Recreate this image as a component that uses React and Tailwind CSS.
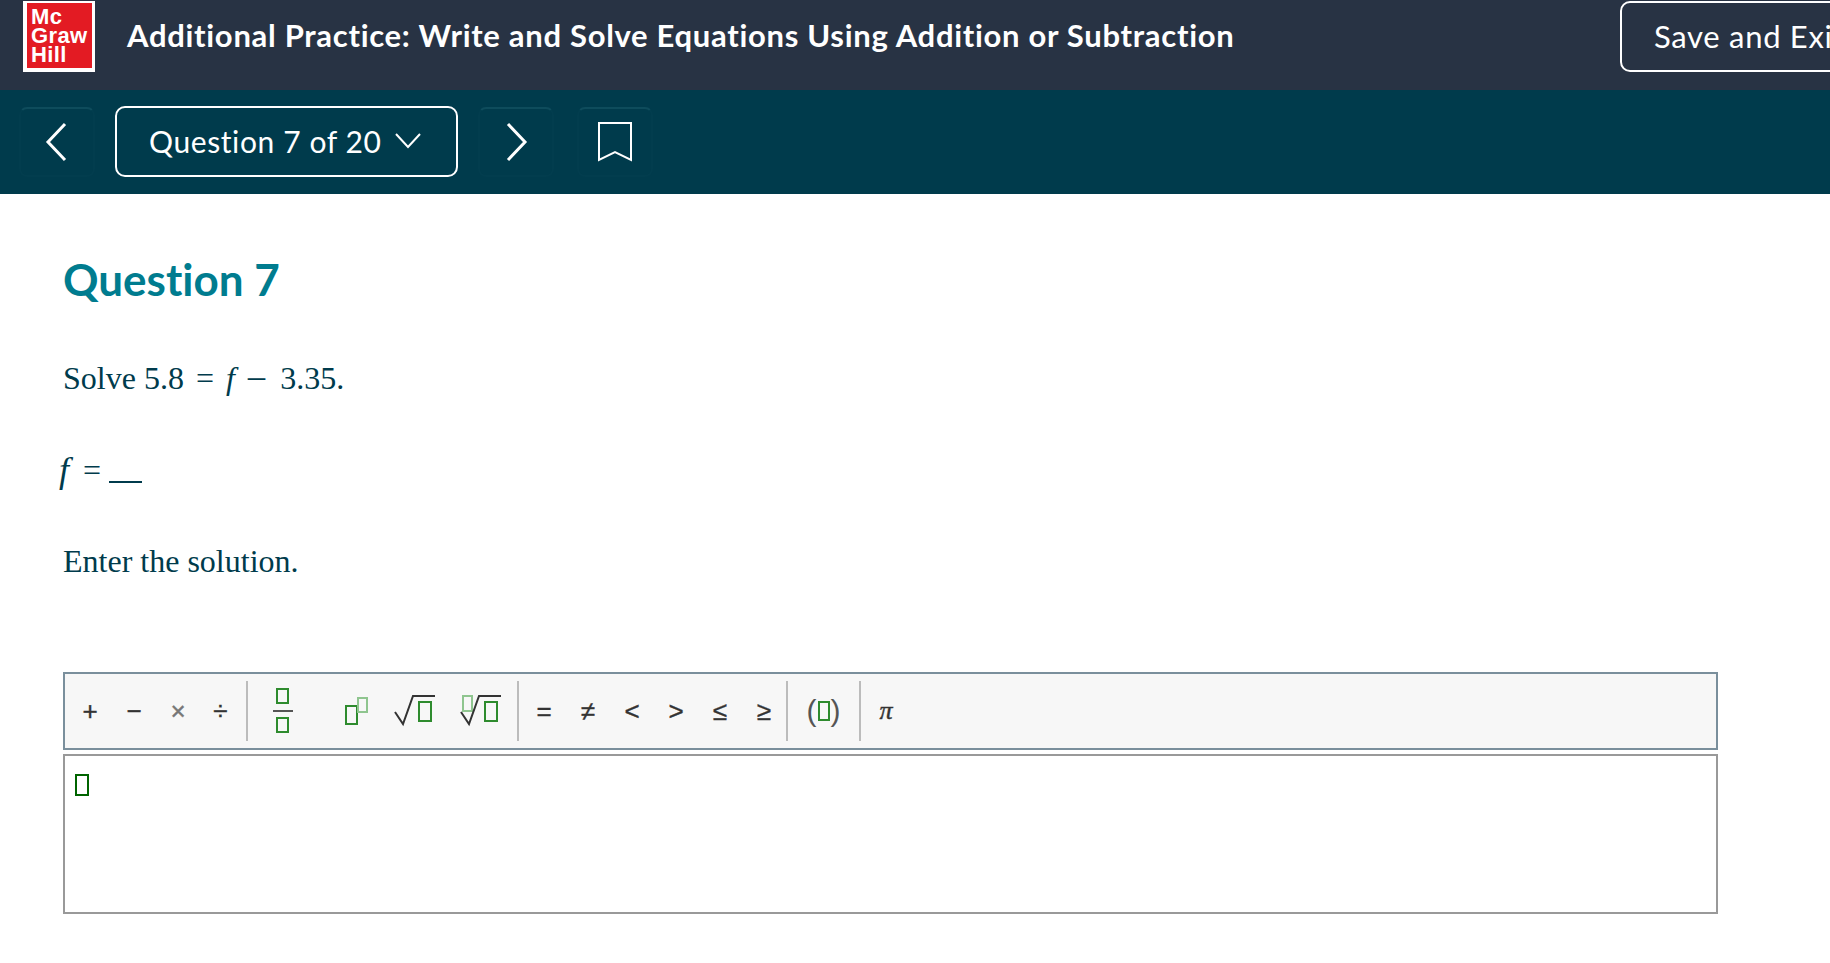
const Box = ({ x, y, w, h, faint }) => (
  <rect x={x} y={y} width={w} height={h} fill="none" stroke={faint ? "#8fc58f" : "#2e8b2e"} strokeWidth="2" />
);

const Sym = ({ w = 44, ml = 0, mr = 0, children, cls = "" }) => (
  <span
    style={{ width: w, marginLeft: ml, marginRight: mr }}
    className={`flex shrink-0 items-center justify-center text-[26px] leading-none text-[#333] [-webkit-text-stroke:0.4px] font-['Liberation_Sans',sans-serif] ${cls}`}
  >
    {children}
  </span>
);

const Sep = () => <span className="my-[7px] w-[2px] shrink-0 bg-[#bcbcbc]" />;

const Chevron = ({ d }) => (
  <svg width="24" height="40" viewBox="0 0 24 40" fill="none" stroke="#fff" strokeWidth="3">
    <path d={d} />
  </svg>
);

const NavButton = ({ children, cls = "" }) => (
  <button className={`flex h-[70px] w-[76px] shrink-0 items-center justify-center rounded-[8px] border-2 border-[#023d4e] border-t-[#0e4c5c] ${cls}`}>
    {children}
  </button>
);

export default function App() {
  return (
    <div className="h-screen w-screen overflow-hidden bg-white font-['Lato',sans-serif]">
      <header className="flex h-[90px] items-start bg-[#283344]">
        <div className="ml-[23px] mt-[1px] h-[71px] w-[72px] shrink-0 border-b-[4px] border-l-[4px] border-r-[3px] border-t-[2px] border-white bg-[#e31b23] pl-[4px] pt-[4px] font-['Liberation_Sans',sans-serif] text-[22px] font-bold leading-[19px] tracking-[0.4px] text-white">
          <div>Mc</div>
          <div>Graw</div>
          <div>Hill</div>
        </div>
        <h1 className="ml-[32px] w-[1493px] shrink-0 pt-[16px] text-[31px] font-bold leading-[38px] tracking-[0.7px] text-white">
          Additional Practice: Write and Solve Equations Using Addition or Subtraction
        </h1>
        <button className="mt-[1px] flex h-[71px] w-[260px] shrink-0 items-center rounded-[10px] border-2 border-white pl-[32px] text-[31px] tracking-[0.7px] text-white whitespace-nowrap">
          Save and Exit
        </button>
      </header>

      <nav className="flex h-[104px] items-center bg-[#003b4c] pl-[19px]">
        <NavButton>
          <Chevron d="M20 2 L3 20 L20 38" />
        </NavButton>
        <button className="mb-[2px] ml-[20px] flex h-[71px] w-[343px] shrink-0 items-center rounded-[10px] border-2 border-white pl-[32px] text-[30px] leading-none tracking-[0.6px] text-white">
          Question 7 of 20
          <svg className="ml-[13px]" width="26" height="16" viewBox="0 0 26 16" fill="none" stroke="#fff" strokeWidth="2">
            <path d="M1 1 L13 14 L25 1" />
          </svg>
        </button>
        <NavButton cls="ml-[20px]">
          <Chevron d="M4 2 L21 20 L4 38" />
        </NavButton>
        <NavButton cls="ml-[23px]">
          <svg width="34" height="40" viewBox="0 0 34 40" fill="none" stroke="#fff" strokeWidth="2">
            <path d="M1 1 H33 V38 L17 30 L1 38 Z" />
          </svg>
        </NavButton>
      </nav>

      <main className="pl-[63px] text-[#003b4c]">
        <h2 className="mt-[60px] text-[44px] font-bold leading-[50px] [font-variant-ligatures:none] text-[#007c8f]">Question 7</h2>

        <div className="font-['Liberation_Serif',serif] text-[32px] leading-[40px]">
          <p className="mt-[54px] flex h-[40px] items-baseline">
            Solve 5.8
            <span className="ml-[12px]">=</span>
            <i className="ml-[12px]">f</i>
            <span className="ml-[11px] translate-y-[3px] text-[38px] leading-[36px]">−</span>
            <span className="ml-[13px]">3.35.</span>
          </p>
          <p className="-ml-[4px] mt-[52px] flex items-end">
            <i className="text-[36px]">f</i>
            <span className="ml-[14px]">=</span>
            <span className="mb-[7px] ml-[8px] h-[2px] w-[33px] bg-[#003b4c]" />
          </p>
          <p className="mt-[51px]">Enter the solution.</p>
        </div>

        <section className="mt-[91px] w-[1655px]">
          <div className="flex h-[78px] border-2 border-[#7a8f9c] bg-[#f7f7f7] pl-[3px]">
            <Sym>+</Sym>
            <Sym>−</Sym>
            <Sym cls="text-[#777]">×</Sym>
            <Sym w={41} mr={5}>÷</Sym>
            <Sep />
            <Sym w={66} ml={2}>
              <svg width="24" height="48" viewBox="0 0 24 48">
                <Box x="6" y="2" w="11" h="14" />
                <rect x="2" y="23" width="20" height="2" fill="#555" />
                <Box x="6" y="31" w="11" h="14" />
              </svg>
            </Sym>
            <Sym w={78} ml={2}>
              <svg width="26" height="30" viewBox="0 0 26 30">
                <Box x="2" y="10" w="11" h="18" />
                <Box x="14" y="2" w="9" h="14" faint />
              </svg>
            </Sym>
            <Sym w={42} ml={-2}>
              <svg width="42" height="34" viewBox="0 0 42 34" fill="none">
                <path d="M1 18 L9 30 L19 2 H41" stroke="#333" strokeWidth="2" />
                <Box x="25" y="8" w="12" h="19" />
              </svg>
            </Sym>
            <Sym w={72} ml={9}>
              <svg width="42" height="34" viewBox="0 0 42 34" fill="none">
                <Box x="3" y="2" w="9" h="15" faint />
                <path d="M1 18 L9 30 L19 2 H41" stroke="#333" strokeWidth="2" />
                <Box x="25" y="8" w="12" h="19" />
              </svg>
            </Sym>
            <Sep />
            <Sym ml={3}>=</Sym>
            <Sym>≠</Sym>
            <Sym>&lt;</Sym>
            <Sym>&gt;</Sym>
            <Sym>≤</Sym>
            <Sym>≥</Sym>
            <Sep />
            <Sym w={71} cls="text-[30px] text-[#555] [-webkit-text-stroke:0px]">
              (
              <span className="mx-[1px] h-[20px] w-[12px] border-2 border-[#2e8b2e]" />
              )
            </Sym>
            <Sep />
            <Sym ml={3} cls="font-['Liberation_Serif',serif] italic">π</Sym>
          </div>

          <div className="mt-[4px] h-[160px] border-2 border-[#999] pl-[10px] pt-[18px]">
            <span className="block h-[22px] w-[14px] border-2 border-[#006400]" />
          </div>
        </section>
      </main>
    </div>
  );
}
